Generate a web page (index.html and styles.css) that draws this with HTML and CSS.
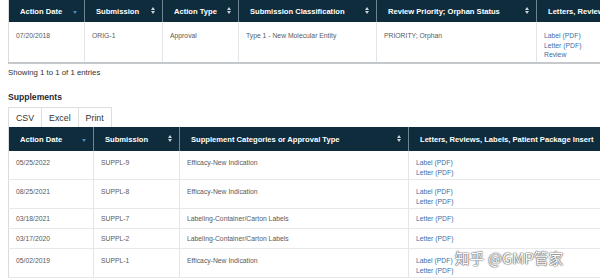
FILE: index.html
```html
<!DOCTYPE html>
<html>
<head>
<meta charset="utf-8">
<link rel="stylesheet" href="styles.css">
</head>
<body>
<div class="page">
  <table class="grid top">
    <colgroup>
      <col style="width:76px"><col style="width:78px"><col style="width:76px"><col style="width:138px"><col style="width:160px"><col style="width:120px">
    </colgroup>
    <thead>
      <tr>
        <th><span>Action Date</span><i class="sort-down"></i></th>
        <th><span>Submission</span><i class="sort-both"></i></th>
        <th><span>Action Type</span><i class="sort-both"></i></th>
        <th><span>Submission Classification</span><i class="sort-both"></i></th>
        <th><span>Review Priority; Orphan Status</span><i class="sort-both"></i></th>
        <th><span>Letters, Reviews, Labels</span></th>
      </tr>
    </thead>
    <tbody>
      <tr class="tall">
        <td>07/20/2018</td>
        <td>ORIG-1</td>
        <td>Approval</td>
        <td>Type 1 - New Molecular Entity</td>
        <td>PRIORITY; Orphan</td>
        <td class="links"><a>Label (PDF)</a><a>Letter (PDF)</a><a>Review</a></td>
      </tr>
    </tbody>
  </table>
  <p class="info">Showing 1 to 1 of 1 entries</p>
  <h3 class="section">Supplements</h3>
  <div class="buttons"><button>CSV</button><button>Excel</button><button>Print</button></div>
  <table class="grid supp">
    <colgroup>
      <col style="width:85px"><col style="width:86px"><col style="width:229px"><col style="width:220px">
    </colgroup>
    <thead>
      <tr>
        <th><span>Action Date</span><i class="sort-down"></i></th>
        <th><span>Submission</span><i class="sort-both"></i></th>
        <th><span>Supplement Categories or Approval Type</span><i class="sort-both"></i></th>
        <th><span>Letters, Reviews, Labels, Patient Package Insert</span></th>
      </tr>
    </thead>
    <tbody>
      <tr class="r2"><td>05/25/2022</td><td>SUPPL-9</td><td>Efficacy-New Indication</td><td class="links"><a>Label (PDF)</a><a>Letter (PDF)</a></td></tr>
      <tr class="r2"><td>08/25/2021</td><td>SUPPL-8</td><td>Efficacy-New Indication</td><td class="links"><a>Label (PDF)</a><a>Letter (PDF)</a></td></tr>
      <tr class="r1"><td>03/18/2021</td><td>SUPPL-7</td><td>Labeling-Container/Carton Labels</td><td class="links"><a>Letter (PDF)</a></td></tr>
      <tr class="r1"><td>03/17/2020</td><td>SUPPL-2</td><td>Labeling-Container/Carton Labels</td><td class="links"><a>Letter (PDF)</a></td></tr>
      <tr class="r2"><td>05/02/2019</td><td>SUPPL-1</td><td>Efficacy-New Indication</td><td class="links"><a>Label (PDF)</a><a>Letter (PDF)</a></td></tr>
    </tbody>
  </table>
  <div class="watermark">知乎 @GMP管家</div>
</div>
</body>
</html>
```

FILE: styles.css
```css
html, body {
  margin: 0;
  padding: 0;
  background: #ffffff;
  overflow: hidden;
}
body {
  font-family: "Liberation Sans", Arial, "Noto Sans CJK SC", sans-serif;
  color: #555;
}
.page {
  position: relative;
  padding-left: 8px;
  width: 700px;
}
.grid {
  border-collapse: collapse;
  table-layout: fixed;
  border-left: 1px solid #d8dcdf;
}
.grid th {
  background: #0f2c3d;
  color: #ffffff;
  font-size: 7.6px;
  font-weight: bold;
  text-align: left;
  padding: 0 8px 0 11px;
  white-space: nowrap;
  border-right: 1px solid #6f8592;
  position: relative;
}
.grid th span {
  display: inline-block;
}
.top th { height: 22px; }
.supp th { height: 24px; }
.grid th i {
  position: absolute;
  right: 7px;
  top: 50%;
  width: 4px;
  height: 7px;
  margin-top: -4px;
}
.sort-both::before {
  content: "";
  position: absolute;
  left: 0;
  top: 0;
  border-left: 2px solid transparent;
  border-right: 2px solid transparent;
  border-bottom: 3px solid #c9d3da;
}
.sort-both::after {
  content: "";
  position: absolute;
  left: 0;
  top: 4px;
  border-left: 2px solid transparent;
  border-right: 2px solid transparent;
  border-top: 3px solid #c9d3da;
}
.sort-down::after {
  content: "";
  position: absolute;
  left: 0;
  top: 4px;
  border-left: 2px solid transparent;
  border-right: 2px solid transparent;
  border-top: 3px solid #4f86c6;
}
.grid td {
  font-size: 6.8px;
  color: #5a5a5a;
  vertical-align: top;
  padding: 9px 8px 0 7px;
  border-right: 1px solid #e3e6e8;
  border-bottom: 1px solid #e6e8ea;
  white-space: nowrap;
  line-height: 9.5px;
}
.top tr.tall td {
  height: 31px;
  border-bottom: 2px solid #c5c9cc;
}
.supp tr.r2 td { height: 21px; padding-top: 7px; }
.supp tr.r1 td { height: 14px; padding-top: 5px; }
.grid td.links a {
  display: block;
  color: #3d6fa8;
}
.info {
  margin: 0;
  padding-top: 4px;
  height: 23px;
  font-size: 7.8px;
  color: #333;
  line-height: 10px;
}
.section {
  margin: 0;
  font-size: 8.6px;
  font-weight: bold;
  color: #1e2a33;
  height: 16px;
  line-height: 12px;
}
.buttons {
  display: flex;
  height: 20px;
}
.buttons button {
  font-family: "Liberation Sans", Arial, sans-serif;
  font-size: 8.8px;
  color: #333;
  background: #fff;
  border: 1px solid #dcdfe1;
  border-bottom: none;
  border-right: none;
  padding: 0 7px;
  height: 20px;
  margin: 0;
}
.buttons button:last-child {
  border-right: 1px solid #dcdfe1;
}
.watermark {
  position: absolute;
  left: 455px;
  top: 247px;
  font-family: "Noto Sans CJK SC", "Liberation Sans", sans-serif;
  font-size: 14.5px;
  color: #ffffff;
  letter-spacing: 0.3px;
  text-shadow: 0 0 1px #555, 0 0 1px #555, 0 0 2px #777;
}
```
